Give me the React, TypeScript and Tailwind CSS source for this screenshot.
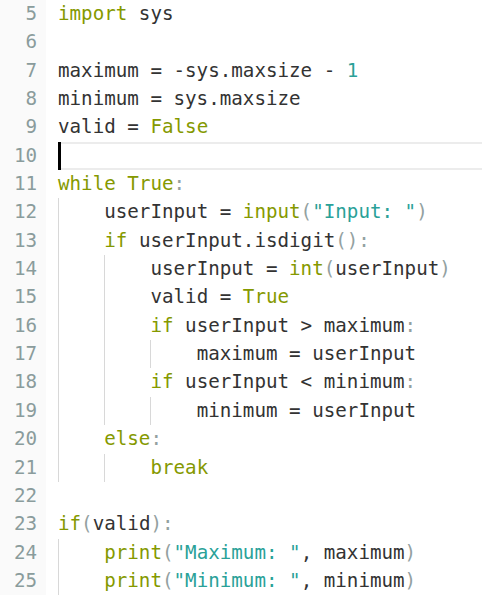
import React from "react";

type Tok = [string, string];
const K = "text-[#859900]";
const S = "text-[#2aa198]";
const P = "text-[#93a1a1]";
const T = "text-[#333333]";

const k = (s: string): Tok => [s, K];
const st = (s: string): Tok => [s, S];
const p = (s: string): Tok => [s, P];
const t = (s: string): Tok => [s, T];

type Line = { n: number; indent: number; toks: Tok[] };

const lines: Line[] = [
  { n: 5, indent: 0, toks: [k("import"), t(" sys")] },
  { n: 6, indent: 0, toks: [] },
  { n: 7, indent: 0, toks: [t("maximum = -sys.maxsize - "), st("1")] },
  { n: 8, indent: 0, toks: [t("minimum = sys.maxsize")] },
  { n: 9, indent: 0, toks: [t("valid = "), k("False")] },
  { n: 10, indent: 0, toks: [] },
  { n: 11, indent: 0, toks: [k("while"), t(" "), k("True"), p(":")] },
  { n: 12, indent: 1, toks: [t("userInput = "), k("input"), p("("), st('"Input: "'), p(")")] },
  { n: 13, indent: 1, toks: [k("if"), t(" userInput.isdigit"), p("():")] },
  { n: 14, indent: 2, toks: [t("userInput = "), k("int"), p("("), t("userInput"), p(")")] },
  { n: 15, indent: 2, toks: [t("valid = "), k("True")] },
  { n: 16, indent: 2, toks: [k("if"), t(" userInput > maximum"), p(":")] },
  { n: 17, indent: 3, toks: [t("maximum = userInput")] },
  { n: 18, indent: 2, toks: [k("if"), t(" userInput < minimum"), p(":")] },
  { n: 19, indent: 3, toks: [t("minimum = userInput")] },
  { n: 20, indent: 1, toks: [k("else"), p(":")] },
  { n: 21, indent: 2, toks: [k("break")] },
  { n: 22, indent: 0, toks: [] },
  { n: 23, indent: 0, toks: [k("if"), p("("), t("valid"), p("):")] },
  { n: 24, indent: 1, toks: [k("print"), p("("), st('"Maximum: "'), t(", maximum"), p(")")] },
  { n: 25, indent: 1, toks: [k("print"), p("("), st('"Minimum: "'), t(", minimum"), p(")")] },
];

export default function App() {
  return (
    <div
      className="w-[482px] h-[613px] bg-white overflow-hidden text-[19.2px] leading-[28.35px]"
      style={{ fontFamily: '"DejaVu Sans Mono", "Liberation Mono", monospace' }}
    >
      <div className="flex flex-col">
        {lines.map((l) => {
          const current = l.n === 10;
          return (
            <div key={l.n} className="flex h-[28.35px]">
              <div className="w-[46px] shrink-0 bg-[#fafafa] text-right pr-[9px] text-[#8a9c9c]">
                {l.n}
              </div>
              <div className="w-[12px] shrink-0" />
              <div
                className={
                  "relative flex-1 whitespace-pre " +
                  (current ? "border-y-2 border-[#ececec] box-border" : "")
                }
              >
                {current && (
                  <div className="absolute left-0 top-[-2px] w-[3px] h-[28.35px] bg-black" />
                )}
                {Array.from({ length: l.indent }).map((_, i) => (
                  <span
                    key={i}
                    className="inline-block shadow-[inset_1px_0_0_#d8d8d8]"
                  >
                    {"    "}
                  </span>
                ))}
                {l.toks.map(([s, c], i) => (
                  <span key={i} className={c}>
                    {s}
                  </span>
                ))}
              </div>
            </div>
          );
        })}
      </div>
    </div>
  );
}
